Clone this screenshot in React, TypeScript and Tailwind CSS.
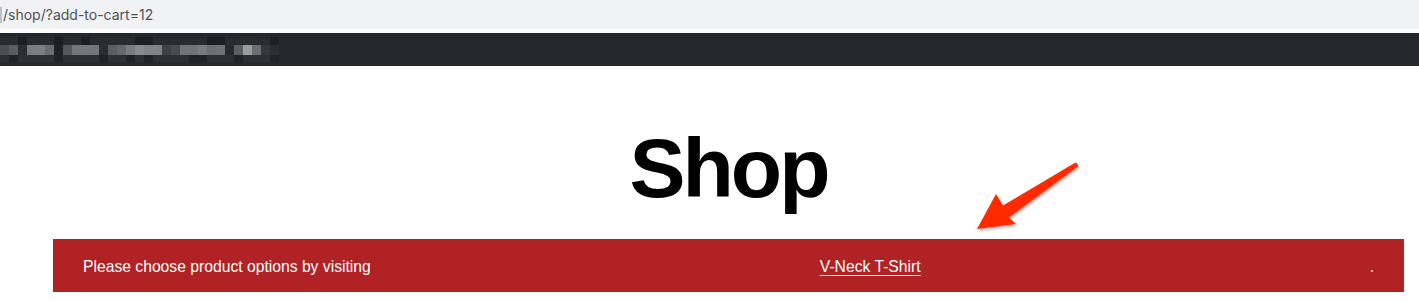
const middle = [
  "#4a4f54", "#5a5e62", "#2a2e33", "#7a7d80", "#7c7f82", "#6a6d70", "#1e2226", "#54585c",
  "#74777a", "#75787b", "#74777a", "#2a2e32", "#5a5e62", "#66696c", "#7a7d80", "#878a8c",
  "#818486", "#808386", "#3e4246", "#484c50", "#717477", "#707376", "#7a7d80", "#6c6f72",
  "#6e7174", "#26292d", "#5a5d61", "#9a9c9e", "#6c6f72", "#34383c", "#2a2e32",
];

const top = middle.map((c, i) => (i % 7 === 2 || i % 9 === 6 ? "#1b1f23" : "#282c30"));
const bottom = middle.map((c, i) => (i % 5 === 1 || i % 8 === 6 ? "#1f2327" : "#2c3034"));

function Pixelated() {
  const rows = [
    { h: "h-[8px]", colors: top },
    { h: "h-[10px]", colors: middle },
    { h: "h-[7px]", colors: bottom },
  ];
  return (
    <div className="flex flex-col">
      {rows.map((row, r) => (
        <div key={r} className={`flex ${row.h}`}>
          {row.colors.map((c, i) => (
            <div key={i} className="h-full w-[9px]" style={{ backgroundColor: c }} />
          ))}
        </div>
      ))}
    </div>
  );
}

function Arrow() {
  return (
    <svg
      className="pointer-events-none absolute left-0 top-0"
      width="1419"
      height="302"
      viewBox="0 0 1419 302"
    >
      <defs>
        <filter id="sh" x="-20%" y="-20%" width="140%" height="140%">
          <feDropShadow dx="1" dy="2" stdDeviation="1.5" floodColor="#000" floodOpacity="0.3" />
        </filter>
      </defs>
      <path
        d="M1075.5 162.5 Q1078.5 163.5 1078 166.5 L1009 217.5 L1016 224 L977 229 L996 194 L1003 205.5 Z"
        fill="#ff2a00"
        filter="url(#sh)"
      />
    </svg>
  );
}

export default function App() {
  return (
    <div className="relative h-[302px] w-[1419px] overflow-hidden bg-white font-['Liberation_Sans',Arial,sans-serif]">
      <div className="flex h-[29px] items-center bg-[#f1f2f4]">
        <span className="h-[16px] w-[2px] bg-[#bfc1c4]" />
        <span className="ml-[1px] font-['Inter',sans-serif] text-[14px] leading-none text-[#4d5156]">
          /shop/?add-to-cart=12
        </span>
      </div>
      <div className="h-[4px] bg-white" />
      <div className="flex h-[33px] items-center bg-[#24282c] pb-[1px]">
        <Pixelated />
      </div>

      <div className="mx-[53px] w-[1351px]">
        <h1 className="mt-[60px] text-center text-[84px] font-bold leading-none tracking-[-3px] text-black">
          Shop
        </h1>

        <div className="mt-[29px] flex h-[53px] items-center justify-between bg-[#b12224] px-[30px] pt-[2px] text-[15.7px] text-white">
          <span>Please choose product options by visiting</span>
          <a href="#" className="underline underline-offset-[3px]">
            V-Neck T-Shirt
          </a>
          <span>.</span>
        </div>
      </div>

      <Arrow />
    </div>
  );
}
